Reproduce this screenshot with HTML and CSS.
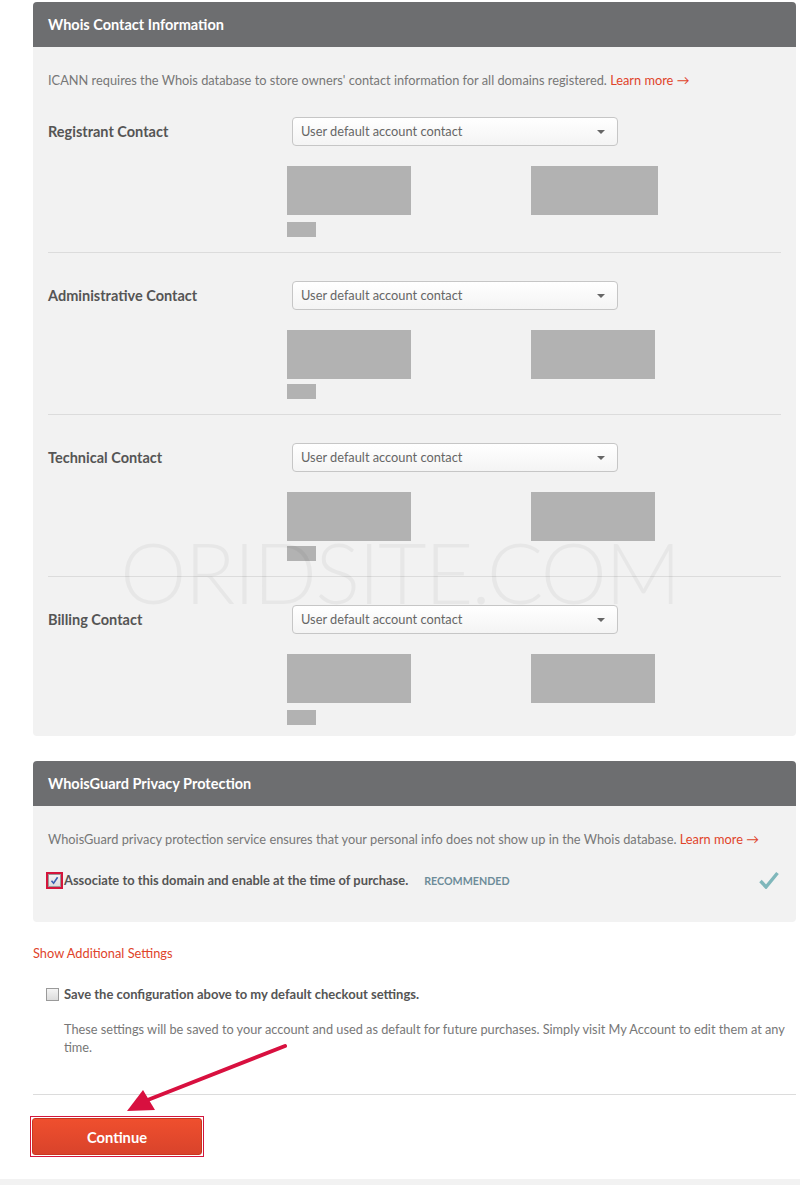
FILE: index.html
```html
<!DOCTYPE html>
<html lang="en">
<head>
    <meta charset="UTF-8">
    <meta name="viewport" content="width=device-width, initial-scale=1.0">
    <title>Whois Settings</title>
    <link rel="stylesheet" href="styles.css">
</head>
<body>
    <div class="page">
        <div class="panel">
            <div class="panel-head">Whois Contact Information</div>
            <div class="panel-body">
                <p class="intro">ICANN requires the Whois database to store owners' contact information for all domains registered. <a href="#">Learn more &rarr;</a></p>

                <div class="contact">
                    <div class="contact-label">Registrant Contact</div>
                    <div class="contact-main">
                        <div class="select">User default account contact <span class="caret"></span></div>
                        <div class="blocks">
                            <span class="block"></span>
                            <span class="block wide"></span>
                        </div>
                        <span class="block small gap7"></span>
                    </div>
                </div>

                <div class="contact">
                    <div class="contact-label">Administrative Contact</div>
                    <div class="contact-main">
                        <div class="select">User default account contact <span class="caret"></span></div>
                        <div class="blocks">
                            <span class="block"></span>
                            <span class="block"></span>
                        </div>
                        <span class="block small"></span>
                    </div>
                </div>

                <div class="contact">
                    <div class="contact-label">Technical Contact</div>
                    <div class="contact-main">
                        <div class="select">User default account contact <span class="caret"></span></div>
                        <div class="blocks">
                            <span class="block"></span>
                            <span class="block"></span>
                        </div>
                        <span class="block small"></span>
                    </div>
                </div>

                <div class="contact last">
                    <div class="contact-label">Billing Contact</div>
                    <div class="contact-main">
                        <div class="select">User default account contact <span class="caret"></span></div>
                        <div class="blocks">
                            <span class="block"></span>
                            <span class="block"></span>
                        </div>
                        <span class="block small gap7"></span>
                    </div>
                </div>
            </div>
        </div>

        <div class="panel guard">
            <div class="panel-head">WhoisGuard Privacy Protection</div>
            <div class="panel-body">
                <p class="intro">WhoisGuard privacy protection service ensures that your personal info does not show up in the Whois database. <a href="#">Learn more &rarr;</a></p>
                <div class="guard-row">
                    <span class="mark-box">
                        <span class="check checked">
                            <svg width="9" height="9" viewBox="0 0 9 9"><path d="M1.5 4.8 L3.6 7.2 L7.6 1.3" fill="none" stroke="#3a5fb0" stroke-width="1.6"/></svg>
                        </span>
                    </span>
                    <span class="guard-text">Associate to this domain and enable at the time of purchase.</span>
                    <span class="recommended">RECOMMENDED</span>
                    <svg class="tick" width="20" height="18" viewBox="0 0 20 18"><path d="M1.5 10 L7 16 L18.5 2" fill="none" stroke="#7fb7bb" stroke-width="3.4"/></svg>
                </div>
            </div>
        </div>

        <a class="more" href="#">Show Additional Settings</a>

        <div class="save">
            <div class="save-row">
                <span class="check"></span>
                <span class="save-title">Save the configuration above to my default checkout settings.</span>
            </div>
            <p class="save-note">These settings will be saved to your account and used as default for future purchases. Simply visit My Account to edit them at any time.</p>
        </div>

        <div class="actions">
            <span class="btn-frame"><button type="button" class="btn">Continue</button></span>
        </div>

        <div class="watermark">ORIDSITE.COM</div>

        <svg class="arrow" width="200" height="90" viewBox="0 0 200 90">
            <line x1="185" y1="16" x2="40" y2="73" stroke="#d8103f" stroke-width="4" stroke-linecap="round"/>
            <polygon points="27,81 43,60 55,80" fill="#d8103f"/>
        </svg>
    </div>
    <div class="bottom-band"></div>
</body>
</html>
```

FILE: styles.css
```css
body {
    margin: 0;
    background: #fff;
    font-family: Lato, "Open Sans", Arial, sans-serif;
    color: #666;
}
.page {
    position: relative;
    padding: 2px 4px 0 33px;
    height: 1179px;
    box-sizing: border-box;
}
.panel {
    background: #f2f2f2;
    border-radius: 4px;
    overflow: hidden;
}
.panel-head {
    background: #6d6e70;
    color: #fff;
    font-weight: bold;
    font-size: 14.5px;
    height: 45px;
    line-height: 45px;
    padding-left: 15px;
}
.panel-body {
    padding: 24px 15px 0;
}
.intro {
    margin: 0;
    font-size: 12.8px;
    line-height: 18px;
    color: #777;
}
.intro a,
.more {
    color: #e0442a;
    text-decoration: none;
}
.contact {
    display: flex;
    padding: 28px 0 15px;
    border-bottom: 1px solid #dcdcdc;
}
.contact.last {
    border-bottom: none;
    padding-bottom: 11px;
}
.contact-label {
    width: 244px;
    flex-shrink: 0;
    font-weight: bold;
    font-size: 14.5px;
    color: #555;
    line-height: 29px;
}
.contact-main {
    display: flex;
    flex-direction: column;
    align-items: flex-start;
}
.select {
    position: relative;
    width: 326px;
    height: 29px;
    box-sizing: border-box;
    border: 1px solid #c6c6c6;
    border-radius: 4px;
    background: linear-gradient(#fff, #f4f4f4);
    font-size: 12.8px;
    line-height: 27px;
    padding-left: 8px;
    color: #666;
}
.caret {
    position: absolute;
    right: 12px;
    top: 12px;
    border-left: 4px solid transparent;
    border-right: 4px solid transparent;
    border-top: 4px solid #666;
}
.blocks {
    display: flex;
    gap: 120px;
    margin: 20px 0 0 -5px;
}
.block {
    display: block;
    width: 124px;
    height: 49px;
    background: #b2b2b2;
}
.block.wide {
    width: 127px;
}
.block.small {
    width: 29px;
    height: 15px;
    margin: 5px 0 0 -5px;
}
.block.small.gap7 {
    margin-top: 7px;
}
.guard {
    margin-top: 25px;
}
.guard .panel-body {
    padding-bottom: 33px;
}
.guard-row {
    display: flex;
    align-items: center;
    margin-top: 23px;
    height: 18px;
}
.mark-box {
    display: inline-flex;
    border: 2px solid #d4163c;
    margin-left: -2px;
    margin-right: 1px;
}
.check {
    display: inline-flex;
    align-items: center;
    justify-content: center;
    width: 11px;
    height: 11px;
    border: 1px solid #9a9a9a;
    background: linear-gradient(#f4f4f4, #dcdcdc);
}
.guard-text {
    font-weight: bold;
    font-size: 12.9px;
    color: #555;
}
.recommended {
    margin-left: 16px;
    font-weight: bold;
    font-size: 10.7px;
    color: #6d8c99;
}
.tick {
    margin-left: auto;
    margin-right: 2px;
}
.more {
    display: block;
    margin-top: 22px;
    font-size: 12.8px;
    line-height: 18px;
}
.save {
    padding: 0 0 0 13px;
}
.save-row {
    display: flex;
    align-items: center;
    gap: 5px;
    margin-top: 23px;
    line-height: 18px;
}
.save-title {
    font-weight: bold;
    font-size: 13px;
    color: #555;
}
.save-note {
    margin: 17px 0 0 18px;
    font-size: 12.75px;
    line-height: 18px;
    color: #777;
}
.actions {
    margin-top: 38px;
    border-top: 1px solid #dcdcdc;
    padding-top: 21px;
}
.btn-frame {
    display: inline-block;
    margin-left: -3px;
    border: 1px solid #d4163c;
    padding: 1px;
}
.btn {
    display: block;
    width: 170px;
    height: 37px;
    border: 1px solid #c9361f;
    border-radius: 3px;
    background: linear-gradient(#ef4f2e, #d9432b);
    color: #fff;
    font-family: Lato, "Open Sans", Arial, sans-serif;
    font-weight: bold;
    font-size: 14.7px;
    cursor: pointer;
}
.watermark {
    position: absolute;
    left: 120px;
    top: 521px;
    font-size: 84px;
    font-weight: 300;
    letter-spacing: -2px;
    color: rgba(0, 0, 0, 0.045);
    pointer-events: none;
}
.arrow {
    position: absolute;
    left: 100px;
    top: 1030px;
}
.bottom-band {
    height: 6px;
    background: #f2f2f2;
}
```
